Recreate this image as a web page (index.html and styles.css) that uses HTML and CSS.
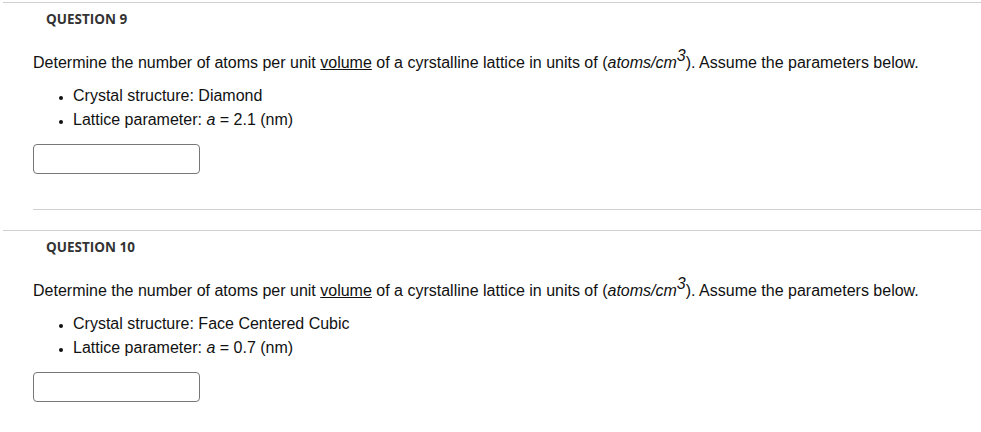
FILE: index.html
```html
<!DOCTYPE html>
<html>
<head>
<meta charset="utf-8">
<link rel="stylesheet" href="styles.css">
</head>
<body>
<div class="question">
  <h2 class="q-title">QUESTION 9</h2>
  <div class="q-body">
    <p class="q-text">Determine the number of atoms per unit <u>volume</u> of a cyrstalline lattice in units of (<i>atoms/cm<sup>3</sup></i>). Assume the parameters below.</p>
    <ul class="q-list">
      <li>Crystal structure: Diamond</li>
      <li>Lattice parameter: <i>a</i> = 2.1 (nm)</li>
    </ul>
    <div class="answer"></div>
    <div class="sep"></div>
  </div>
</div>
<div class="question">
  <h2 class="q-title">QUESTION 10</h2>
  <div class="q-body">
    <p class="q-text">Determine the number of atoms per unit <u>volume</u> of a cyrstalline lattice in units of (<i>atoms/cm<sup>3</sup></i>). Assume the parameters below.</p>
    <ul class="q-list">
      <li>Crystal structure: Face Centered Cubic</li>
      <li>Lattice parameter: <i>a</i> = 0.7 (nm)</li>
    </ul>
    <div class="answer"></div>
  </div>
</div>
</body>
</html>
```

FILE: styles.css
```css
html, body {
  margin: 0;
  padding: 0;
  background: #fff;
}
body {
  padding-top: 2px;
  font-family: "Liberation Sans", Arial, sans-serif;
  color: #111;
}
.question {
  margin-left: 3px;
  border-top: 1px solid #d0d0d0;
}
.q-title {
  margin: 6px 0 0 43px;
  font-family: "Open Sans", sans-serif;
  font-weight: 700;
  font-size: 13.5px;
  line-height: 20px;
  color: #333;
}
.q-body {
  padding-left: 30px;
}
.q-text {
  margin: 24px 0 0;
  font-size: 16px;
  line-height: 20px;
}
.q-text sup {
  font-size: 16px;
  line-height: 0;
  vertical-align: 7px;
}
.q-list {
  margin: 11px 0 0;
  padding-left: 40px;
  font-size: 16px;
  line-height: 24px;
}
.q-list li::marker {
  font-size: 12px;
}
.answer {
  margin-top: 12px;
  width: 165px;
  height: 28px;
  border: 1px solid #777;
  border-radius: 4px;
}
.sep {
  margin-top: 35px;
  height: 1px;
  background: #d0d0d0;
  margin-bottom: 20px;
}
```
